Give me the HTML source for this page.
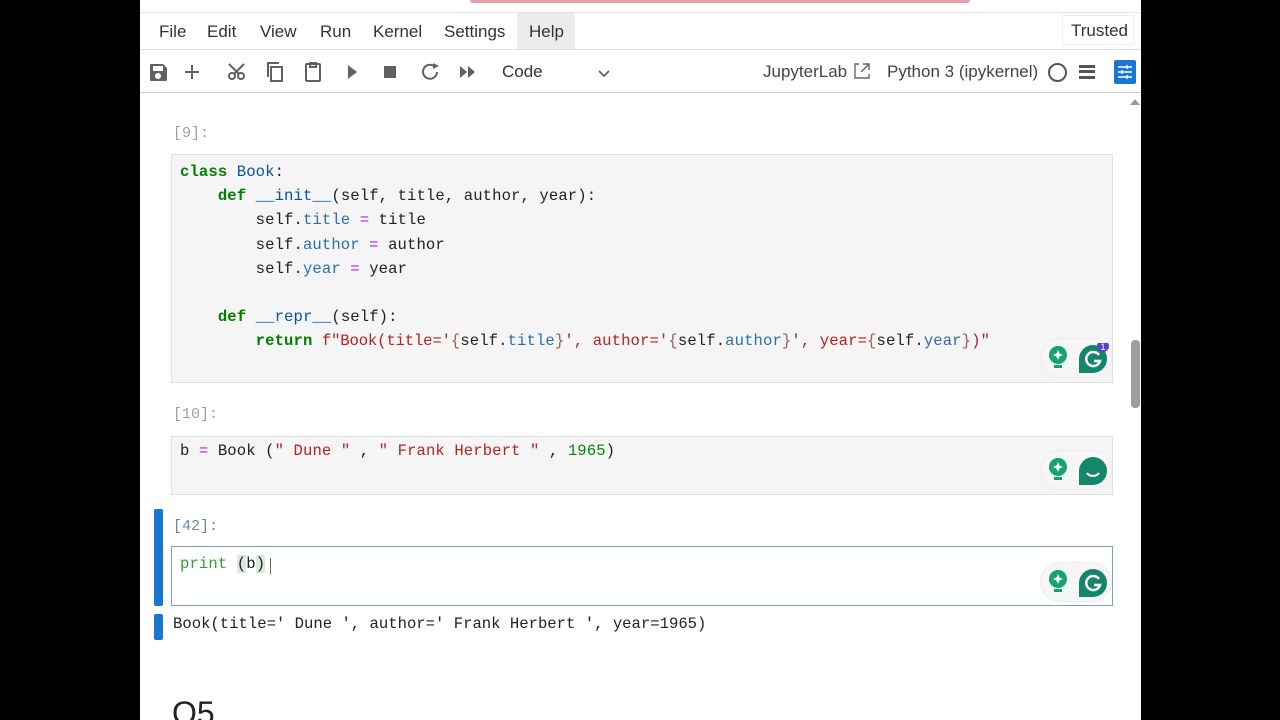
<!DOCTYPE html>
<html><head><meta charset="utf-8"><style>
*{margin:0;padding:0;box-sizing:border-box}
body{width:1280px;height:720px;background:#000;position:relative;overflow:hidden;font-family:"Liberation Sans",sans-serif}
#app{position:absolute;left:140px;top:0;width:1001px;height:720px;background:#fff;overflow:hidden}
.a{position:absolute}
.mono{font-family:"Liberation Mono",monospace;font-size:15.6px;white-space:pre;letter-spacing:0.1px}
.menu span{position:absolute;top:22px;font-size:17px;color:#333}
.prompt{color:#a0a0a0;font-family:"Liberation Mono",monospace;font-size:15px}
.cell{position:absolute;left:31px;width:942px;background:#f5f5f5;border:1px solid #e0e0e0}
.k{color:#008000;font-weight:bold}.n{color:#0055aa}.p{color:#aa22ff}.s{color:#ba2121}.num{color:#080}.at{color:#2a6fb0}
.gram{position:absolute;width:72px;height:40px;border-radius:20px;background:#f6f6f6;border:1px solid #ececec}
</style></head><body>
<div id="app">
<div class="a" style="left:330px;top:0;width:500px;height:3px;background:#e8a0a8;border-radius:0 0 4px 4px"></div>
<div class="a" style="left:0;top:12px;width:1001px;height:1px;background:#e4e4e4"></div>
<div class="menu">
<span style="left:19px">File</span><span style="left:67px">Edit</span><span style="left:120px">View</span><span style="left:180px">Run</span><span style="left:233px">Kernel</span><span style="left:304px">Settings</span>
<div class="a" style="left:377px;top:13px;width:58px;height:36px;background:#ececec"></div>
<span style="left:389px">Help</span>
</div>
<div class="a" style="left:922px;top:15px;width:72px;height:30px;border:1px solid #eee;background:#fff;font-size:17px;color:#333;padding:5px 0 0 8px">Trusted</div>
<div class="a" style="left:0;top:49px;width:1001px;height:1px;background:#ddd"></div>
<div class="a" style="left:0;top:92px;width:1001px;height:1px;background:#ccc"></div>
<svg class="a" style="left:0;top:55px" width="480" height="34" viewBox="0 0 480 34" fill="#616161">
<path d="M11 9h12l4 4v12a1 1 0 0 1-1 1H11a1 1 0 0 1-1-1V10a1 1 0 0 1 1-1zM13 11v5h10v-5zM18 18a3 3 0 1 0 .01 0z"/>
<path d="M57 16h2v-6h2v6h6v2h-6v6h-2v-6h-6v-2z" transform="translate(-8 0)"/>
<g fill="none" stroke="#616161" stroke-width="2"><circle cx="92" cy="21" r="3"/><circle cx="101" cy="21" r="3"/><path d="M94 19l10-10M99 19l-10-10"/>
<rect x="131" y="12" width="11" height="14"/><path d="M128 22V8h11"/>
<rect x="166" y="9" width="14" height="17" rx="1"/><path d="M170 8h6v4h-6z"/>
<path d="M294 11a7 7 0 1 0 3 6"/></g>
<path d="M208 10l9 7-9 7z"/><rect x="244" y="11" width="12" height="12"/><path d="M293 8l6 3-6 3z"/>
<path d="M320 11l7 6-7 6zM328 11l7 6-7 6z"/>
</svg>
<div class="a" style="left:362px;top:62px;font-size:17px;color:#333">Code</div>
<svg class="a" style="left:458px;top:68px" width="12" height="10"><path d="M1 3l5 5 5-5" fill="none" stroke="#555" stroke-width="1.6"/></svg>
<div class="a" style="left:623px;top:62px;font-size:17px;color:#444">JupyterLab</div>
<svg class="a" style="left:713px;top:62px" width="18" height="18"><path d="M6 2H2v14h14v-4M10 2h6v6M16 2l-8 8" fill="none" stroke="#666" stroke-width="1.4"/></svg>
<div class="a" style="left:747px;top:62px;font-size:17px;color:#444">Python 3 (ipykernel)</div>
<div class="a" style="left:908px;top:63px;width:19px;height:19px;border:2px solid #555;border-radius:50%"></div>
<div class="a" style="left:939px;top:65px;width:16px;height:14px;border-top:3px solid #555;border-bottom:3px solid #555"></div>
<div class="a" style="left:939px;top:70px;width:16px;height:3px;background:#555"></div>
<div class="a" style="left:974px;top:60px;width:22px;height:24px;background:#1976d2;border-radius:2px"></div>
<svg class="a" style="left:976px;top:63px" width="18" height="18" stroke="#fff" stroke-width="1.5"><path d="M2 4h14M2 9h14M2 14h14"/><path d="M11 2v4M6 7v4M11 12v4"/></svg>
<svg class="a" style="left:990px;top:98px" width="10" height="8"><path d="M0 7l5-6 5 6z" fill="#999"/></svg>
<div class="a" style="left:991px;top:340px;width:9px;height:68px;background:#9e9e9e;border-radius:4px"></div>
<div class="a prompt" style="left:33px;top:125px">[9]:</div>
<div class="cell" style="top:154px;height:229px"></div>
<div class="a mono" style="left:40px;top:160px;line-height:24.2px;color:#222"><span class="k">class</span> <span class="n">Book</span>:
    <span class="k">def</span> <span class="n">__init__</span>(self, title, author, year):
        self.<span class="at">title</span> <span class="p">=</span> title
        self.<span class="at">author</span> <span class="p">=</span> author
        self.<span class="at">year</span> <span class="p">=</span> year

    <span class="k">def</span> <span class="n">__repr__</span>(self):
        <span class="k">return</span> <span class="s" style="letter-spacing:-0.15px">f"Book(title='</span><span style="color:#a45a52">{</span>self.<span class="at">title</span><span style="color:#a45a52">}</span><span class="s">', author='</span><span style="color:#a45a52">{</span>self.<span class="at">author</span><span style="color:#a45a52">}</span><span class="s">', year=</span><span style="color:#a45a52">{</span>self.<span class="at">year</span><span style="color:#a45a52">}</span><span class="s">)"</span></div>
<div class="a prompt" style="left:33px;top:406px">[10]:</div>
<div class="cell" style="top:436px;height:59px"></div>
<div class="a mono" style="left:40px;top:442px;color:#222">b <span class="p">=</span> Book (<span class="s">" Dune "</span> , <span class="s">" Frank Herbert "</span> , <span class="num">1965</span>)</div>
<div class="a" style="left:14px;top:509px;width:9px;height:97px;background:#1976d2;border-radius:2px"></div>
<div class="a prompt" style="left:33px;top:518px;color:#6c87a6">[42]:</div>
<div class="a" style="left:31px;top:546px;width:942px;height:60px;background:#fff;border:1px solid #78a0c8"></div>
<div class="a mono" style="left:40px;top:555px;color:#222"><span style="color:#3a9a3a">print</span> <span style="background:#dbe8dc">(</span>b<span style="background:#dbe8dc">)</span></div>
<div class="a" style="left:130px;top:558px;width:1px;height:16px;background:#666"></div>
<div class="a" style="left:14px;top:614px;width:9px;height:26px;background:#1976d2;border-radius:2px"></div>
<div class="a mono" style="left:33px;top:615px;color:#222;letter-spacing:0">Book(title=' Dune ', author=' Frank Herbert ', year=1965)</div>
<div class="a" style="left:32px;top:695px;font-size:32px;color:#222">Q5</div>
<div class="gram" style="left:900px;top:338px"></div>
<div class="gram" style="left:900px;top:450px"></div>
<div class="gram" style="left:900px;top:562px"></div>
<svg class="a" style="left:908px;top:343px" width="62" height="32"><circle cx="10" cy="12" r="9" fill="#15a36e"/><path d="M6 22h8v3H6z" fill="#15a36e"/><path d="M10 7l1.5 3.5L15 12l-3.5 1.5L10 17l-1.5-3.5L5 12l3.5-1.5z" fill="#fff"/><path d="M31 16v14h14z" fill="#15866a"/><circle cx="45" cy="16" r="14" fill="#15866a"/><path d="M51 12a7 7 0 1 0 1 6h-6" fill="none" stroke="#fff" stroke-width="2.5"/><circle cx="55" cy="3" r="6" fill="#5b3fd4"/><text x="55" y="7" font-size="9" fill="#fff" text-anchor="middle" font-family="Liberation Sans">1</text></svg>
<svg class="a" style="left:908px;top:455px" width="62" height="32"><circle cx="10" cy="12" r="9" fill="#15a36e"/><path d="M6 22h8v3H6z" fill="#15a36e"/><path d="M10 7l1.5 3.5L15 12l-3.5 1.5L10 17l-1.5-3.5L5 12l3.5-1.5z" fill="#fff"/><path d="M31 16v14h14z" fill="#15866a"/><circle cx="45" cy="16" r="14" fill="#15866a"/><path d="M39 18a7 6 0 0 0 12 0" fill="none" stroke="#fff" stroke-width="2"/></svg>
<svg class="a" style="left:908px;top:567px" width="62" height="32"><circle cx="10" cy="12" r="9" fill="#15a36e"/><path d="M6 22h8v3H6z" fill="#15a36e"/><path d="M10 7l1.5 3.5L15 12l-3.5 1.5L10 17l-1.5-3.5L5 12l3.5-1.5z" fill="#fff"/><path d="M31 16v14h14z" fill="#15866a"/><circle cx="45" cy="16" r="14" fill="#15866a"/><path d="M51 12a7 7 0 1 0 1 6h-6" fill="none" stroke="#fff" stroke-width="2.5"/></svg>
</div>
</body></html>
